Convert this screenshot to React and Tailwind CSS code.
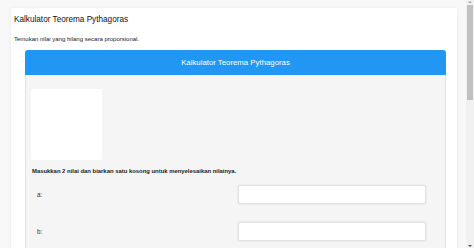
import React from "react";

const Row = ({ label }) => (
  <div className="flex items-center justify-between pl-[6px] pr-[19px]">
    <span className="text-[6.3px] leading-[8px] text-[#333]">{label}</span>
    <input
      type="text"
      className="w-[188px] h-[19px] bg-white border border-[#e2e2e2] rounded-[2px] shadow-[0_0_2px_rgba(0,0,0,0.12)] outline-none"
    />
  </div>
);

const App = () => {
  return (
    <div
      className="flex w-[474px] h-[248px] overflow-hidden bg-[#f8f8f8]"
      style={{ fontFamily: '"Liberation Sans", Arial, sans-serif' }}
    >
      <div className="flex-1 pl-[11px] pt-[8px] pr-[9px]">
        <div className="bg-white shadow-[0_0_3px_rgba(0,0,0,0.08)] pt-[7px] pl-[3px] h-[260px]">
          <h1 className="text-[8.2px] leading-[10px] text-[#111]">Kalkulator Teorema Pythagoras</h1>
          <p className="mt-[10px] text-[6px] leading-[8px] text-[#222]">
            Temukan nilai yang hilang secara proporsional.
          </p>

          <div className="mt-[7px] ml-[11px] mr-[11px]">
            <div className="h-[25px] bg-[#2196f3] rounded-t-[3px] flex items-center justify-center">
              <span className="text-[7.8px] text-white">Kalkulator Teorema Pythagoras</span>
            </div>
            <div className="bg-[#f5f5f5] border-x border-[#e0e0e0] pt-[14px] pl-[5px] h-[200px]">
              <div className="w-[71px] h-[71px] bg-white rounded-[2px]"></div>
              <p className="mt-[7px] ml-[1px] text-[5.9px] leading-[8px] font-bold text-[#222]">
                Masukkan 2 nilai dan biarkan satu kosong untuk menyelesaikan nilainya.
              </p>
              <div className="mt-[10px] flex flex-col gap-[18px]">
                <Row label="a:" />
                <Row label="b:" />
              </div>
            </div>
          </div>
        </div>
      </div>

      {/* scrollbar */}
      <div className="w-[8px] bg-[#f1f1f1] flex flex-col items-center">
        <div className="mt-[1px] w-0 h-0 border-x-[2px] border-x-transparent border-b-[2px] border-b-[#a3a3a3]"></div>
        <div className="mt-[2px] w-[6px] h-[95px] bg-[#c1c1c1]"></div>
        <div className="flex-1"></div>
        <div className="mb-[1px] w-0 h-0 border-x-[2px] border-x-transparent border-t-[2px] border-t-[#505050]"></div>
      </div>
    </div>
  );
};

export default App;
